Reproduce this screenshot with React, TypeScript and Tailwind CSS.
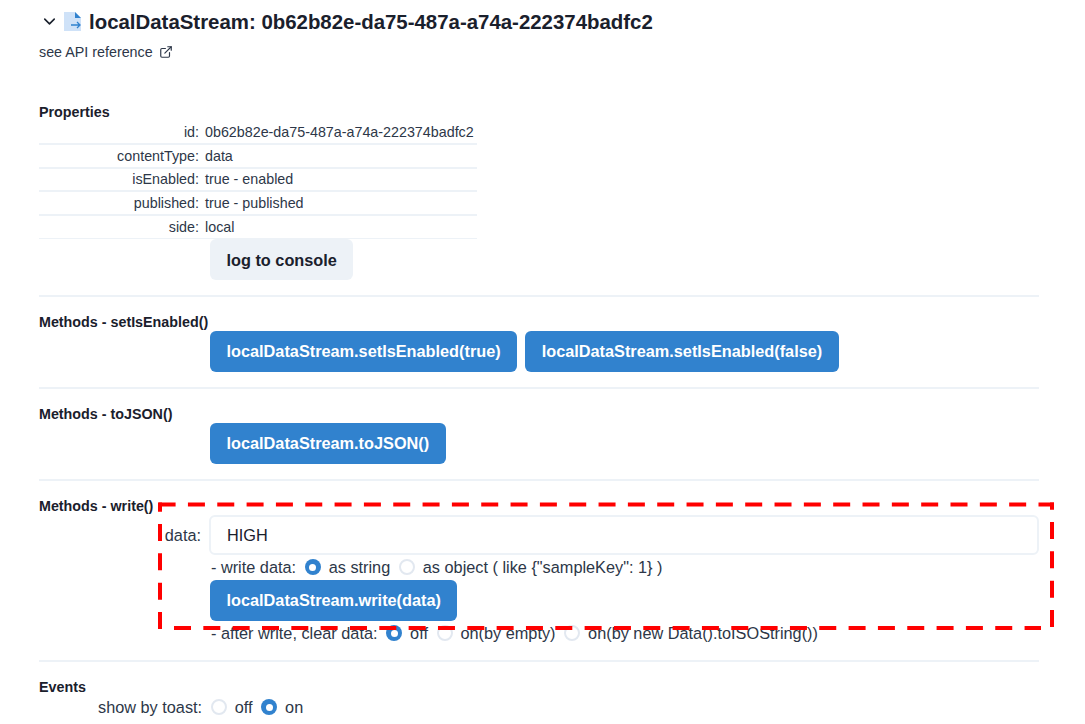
import { ChevronDown, ExternalLink } from "lucide-react";
import type { ReactNode } from "react";

function Radio({ on }: { on?: boolean }) {
  return on ? (
    <span className="ml-[8.6px] flex h-4 w-4 shrink-0 items-center justify-center rounded-full bg-[#3182ce]">
      <span className="h-[7px] w-[7px] rounded-full bg-white" />
    </span>
  ) : (
    <span className="ml-[8.6px] block h-4 w-4 shrink-0 rounded-full border-2 border-[#e2e8f0] bg-white" />
  );
}

function Btn({ children, gray }: { children: ReactNode; gray?: boolean }) {
  return (
    <button
      className={
        gray
          ? "h-[41px] rounded-md bg-[#edf2f7] px-[16.5px] text-[16.3px] font-bold text-[#1a202c]"
          : "h-[41px] rounded-md bg-[#3182ce] px-[16.5px] pb-[2px] text-[16.3px] font-bold text-white"
      }
    >
      {children}
    </button>
  );
}

function Row({ k, v, last }: { k: string; v: string; last?: boolean }) {
  return (
    <div className={last ? "flex h-[23px] items-center border-b border-[#edf2f7]" : "flex h-[23.75px] items-center border-b-2 border-[#edf2f7]"}>
      <span className="w-[160px] text-right">{k}:</span>
      <span className="ml-[6px]">{v}</span>
    </div>
  );
}

function Head({ children }: { children: ReactNode }) {
  return <div className="mt-[17px] font-bold leading-[17px] text-[#1a202c]">{children}</div>;
}

export default function App() {
  return (
    <div className="relative h-[724px] w-[1085px] overflow-hidden bg-white font-['Liberation_Sans',sans-serif] text-[14.3px] leading-5 text-[#2d3748]">
      <div className="w-[1039px] pl-[39px]">
        <div className="flex h-[43px] items-center">
          <ChevronDown className="ml-[1px] h-[19px] w-[19px] text-[#1a202c]" strokeWidth={2} />
          <svg className="ml-[5px] h-[19px] w-[18px]" viewBox="0 0 18 19">
            <path d="M0 0h11l6 6v13H0z" fill="#cfe2f8" />
            <path d="M11 0l6 6h-6z" fill="#3182ce" />
            <path d="M7 13h9M13 10l3 3-3 3" stroke="#3182ce" strokeWidth="1.3" fill="none" />
          </svg>
          <h2 className="ml-[7px] text-[20.42px] leading-6 font-bold text-[#1a202c]">localDataStream: 0b62b82e-da75-487a-a74a-222374badfc2</h2>
        </div>
        <div className="flex h-[17px] items-center gap-[6px]">
          <span>see API reference</span>
          <ExternalLink className="h-[14px] w-[14px]" strokeWidth={2} />
        </div>

        <div className="mt-[44px] font-bold leading-[17px] text-[#1a202c]">Properties</div>
        <div className="w-[438px]">
          <Row k="id" v="0b62b82e-da75-487a-a74a-222374badfc2" />
          <Row k="contentType" v="data" />
          <Row k="isEnabled" v="true - enabled" />
          <Row k="published" v="true - published" />
          <Row k="side" v="local" last />
        </div>
        <div className="pl-[171px]">
          <Btn gray>log to console</Btn>
        </div>
        <div className="mt-[15px] border-t-2 border-[#edf2f7]" />

        <Head>Methods - setIsEnabled()</Head>
        <div className="flex gap-2 pl-[171px]">
          <Btn>localDataStream.setIsEnabled(true)</Btn>
          <Btn>localDataStream.setIsEnabled(false)</Btn>
        </div>
        <div className="mt-[15px] border-t-2 border-[#edf2f7]" />

        <Head>Methods - toJSON()</Head>
        <div className="pl-[171px]">
          <Btn>localDataStream.toJSON()</Btn>
        </div>
        <div className="mt-[15px] border-t-2 border-[#edf2f7]" />

        <Head>Methods - write()</Head>
        <div className="flex items-center text-[16.3px]">
          <span className="w-[162px] text-right">data:</span>
          <div className="ml-[8px] flex h-10 flex-1 items-center rounded-md border-2 border-[#edf2f7] px-4 text-[#1a202c]">HIGH</div>
        </div>
        <div className="flex h-6 items-center pl-[172px] text-[16.3px]">
          <span>- write data:</span>
          <Radio on />
          <span className="ml-2">as string</span>
          <Radio />
          <span className="ml-2">as object ( like {"{"}"sampleKey": 1{"}"} )</span>
        </div>
        <div className="mt-px pl-[171px]">
          <Btn>localDataStream.write(data)</Btn>
        </div>
        <div className="flex h-6 items-center pl-[172px] text-[16.3px]">
          <span>- after write, clear data:</span>
          <Radio on />
          <span className="ml-2">off</span>
          <Radio />
          <span className="ml-2">on(by empty)</span>
          <Radio />
          <span className="ml-2">on(by new Data().toISOString())</span>
        </div>
        <div className="mt-[15px] border-t-2 border-[#edf2f7]" />

        <Head>Events</Head>
        <div className="mt-[-1px] flex h-6 items-center pl-[59px] text-[16.3px]">
          <span>show by toast:</span>
          <Radio />
          <span className="ml-2">off</span>
          <Radio on />
          <span className="ml-2">on</span>
        </div>
      </div>

      <svg className="pointer-events-none absolute top-0 left-0 h-[724px] w-[1085px]" viewBox="0 0 1085 724">
        <g fill="none" stroke="#ff0000" strokeWidth="4" strokeDasharray="17 12.33">
          <line x1="158.6" y1="504.5" x2="1054" y2="504.5" />
          <line x1="1052" y1="502.5" x2="1052" y2="627" strokeDashoffset="9.8" />
          <line x1="174" y1="628" x2="1041" y2="628" />
          <line x1="160" y1="502.5" x2="160" y2="630" strokeDashoffset="7.8" />
        </g>
      </svg>
    </div>
  );
}
